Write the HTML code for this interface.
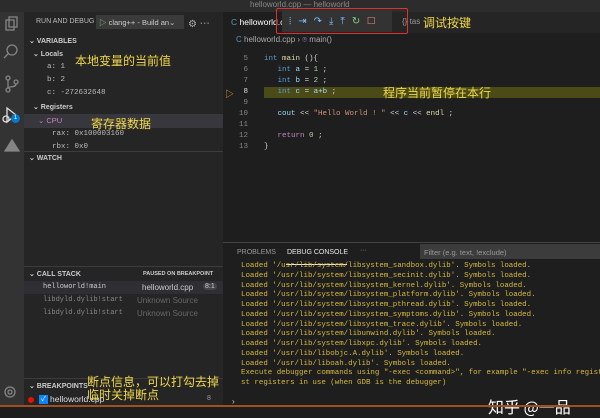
<!DOCTYPE html>
<html><head><meta charset="utf-8"><style>
*{margin:0;padding:0;box-sizing:border-box}
body{width:600px;height:407px;background:#1e1e1e;position:relative;overflow:hidden;font-family:"Liberation Sans","Noto Sans CJK SC",sans-serif;color:#ccc}
.a{position:absolute;white-space:nowrap}
.m{font-family:"Liberation Mono","Noto Sans CJK SC",monospace}
.cn{color:#f0d848;font-size:12px;font-family:"Noto Sans CJK SC",sans-serif}
.sb{font-size:7px;font-weight:bold;color:#ccc}
</style></head><body>
<div class="a" style="left:0;top:0;width:600px;height:12px;background:#2c2c2c"></div>
<div class="a" style="left:250px;top:0;font-size:8px;color:#888">helloworld.cpp — helloworld</div>
<div class="a" style="left:0;top:12px;width:24px;height:395px;background:#333"></div>
<svg class="a" style="left:0;top:12px" width="24" height="395" viewBox="0 0 24 395" fill="none" stroke="#858585" stroke-width="1.3">
<rect x="6" y="8" width="8" height="10"/><rect x="9" y="5" width="8" height="10"/>
<circle cx="12" cy="38" r="5"/><path d="M8 42 L4 46"/>
<circle cx="8" cy="66" r="2"/><circle cx="8" cy="78" r="2"/><circle cx="16" cy="70" r="2"/><path d="M8 68V76M16 72C16 76 8 74 8 76"/>
<path d="M7 96 L16 103 L7 110Z" stroke="#ddd"/><circle cx="6" cy="107" r="3" stroke="#ddd"/>
<path d="M5 139 L12 128 L19 139Z" fill="#858585"/>
<circle cx="10" cy="380" r="5"/><circle cx="10" cy="380" r="2"/>
</svg>
<div class="a" style="left:11px;top:114px;width:9px;height:9px;border-radius:50%;background:#007acc;color:#fff;font-size:6px;text-align:center;line-height:9px">1</div>
<div class="a" style="left:24px;top:12px;width:199px;height:395px;background:#252526"></div>
<div class="a" style="left:36px;top:18px;font-size:7px;color:#bbb">RUN AND DEBUG</div>
<div class="a" style="left:96px;top:15px;width:88px;height:14px;background:#3a3a3a"></div>
<div class="a" style="left:99px;top:17px;font-size:7.5px;color:#ccc"><span style="color:#89d185">▷</span> clang++ - Build an⌄</div>
<div class="a" style="left:188px;top:15px;font-size:10px;color:#aaa">⚙ ⋯</div>
<div class="a sb" style="left:29px;top:37px">⌄ VARIABLES</div>
<div class="a sb" style="left:33px;top:50px">⌄ Locals</div>
<div class="a m" style="left:47px;top:63px;font-size:7.5px;color:#bbb">a: 1</div>
<div class="a m" style="left:47px;top:76px;font-size:7.5px;color:#bbb">b: 2</div>
<div class="a m" style="left:47px;top:89px;font-size:7.5px;color:#bbb">c: -272632648</div>
<div class="a sb" style="left:33px;top:103px">⌄ Registers</div>
<div class="a" style="left:24px;top:114px;width:199px;height:14px;background:#37373d"></div>
<div class="a" style="left:38px;top:116px;font-size:7.5px;color:#c586c0">⌄ CPU</div>
<div class="a m" style="left:52px;top:130px;font-size:7.5px;color:#bbb">rax: 0x100003160</div>
<div class="a m" style="left:52px;top:143px;font-size:7.5px;color:#bbb">rbx: 0x0</div>
<div class="a" style="left:24px;top:151px;width:199px;height:1px;background:#3c3c3c"></div>
<div class="a sb" style="left:29px;top:154px">⌄ WATCH</div>
<div class="a" style="left:24px;top:266px;width:199px;height:1px;background:#3c3c3c"></div>
<div class="a sb" style="left:29px;top:270px">⌄ CALL STACK</div>
<div class="a" style="left:143px;top:271px;font-size:5.5px;font-weight:bold;color:#ccc">PAUSED ON BREAKPOINT</div>
<div class="a" style="left:24px;top:281px;width:199px;height:13px;background:#2f2f33"></div>
<div class="a m" style="left:43px;top:283px;font-size:7px;color:#ccc">helloworld!main</div>
<div class="a" style="left:142px;top:283px;font-size:8px;color:#ccc">helloworld.cpp</div>
<div class="a" style="left:203px;top:283px;font-size:7px;background:#444;padding:0 2px;border-radius:4px">8:1</div>
<div class="a m" style="left:43px;top:296px;font-size:7px;color:#888">libdyld.dylib!start</div>
<div class="a" style="left:137px;top:296px;font-size:8px;color:#666">Unknown Source</div>
<div class="a m" style="left:43px;top:309px;font-size:7px;color:#888">libdyld.dylib!start</div>
<div class="a" style="left:137px;top:309px;font-size:8px;color:#666">Unknown Source</div>
<div class="a" style="left:24px;top:378px;width:199px;height:1px;background:#3c3c3c"></div>
<div class="a sb" style="left:29px;top:382px">⌄ BREAKPOINTS</div>
<div class="a" style="left:28px;top:397px;width:6px;height:6px;border-radius:50%;background:#e51400"></div>
<div class="a" style="left:39px;top:395px;width:9px;height:9px;background:#0a84ff;color:#fff;font-size:7px;line-height:9px;text-align:center">✓</div>
<div class="a" style="left:50px;top:394px;font-size:8.5px;color:#ddd">helloworld.cpp</div>
<div class="a" style="left:207px;top:395px;font-size:7px;color:#999">8</div>
<div class="a cn" style="left:75px;top:52px">本地变量的当前值</div>
<div class="a cn" style="left:91px;top:115px">寄存器数据</div>
<div class="a cn" style="left:87px;top:375px;line-height:13px">断点信息，可以打勾去掉<br>临时关掉断点</div>
<div class="a" style="left:223px;top:12px;width:377px;height:21px;background:#252526"></div>
<div class="a" style="left:223px;top:12px;width:60px;height:21px;background:#1e1e1e"></div>
<div class="a" style="left:231px;top:17px;font-size:8.5px;color:#fff"><span style="color:#519aba">C</span> helloworld.c</div>
<div class="a" style="left:282px;top:10px;width:110px;height:22px;background:#333"></div>
<div class="a" style="left:289px;top:16px;font-size:10px;color:#75beff;letter-spacing:7px">⦙⇥↷⤓⤒<span style="color:#89d185">↻</span><span style="color:#f48771">☐</span></div>
<div class="a" style="left:276px;top:8px;width:132px;height:26px;border:1.5px solid #e03030;border-radius:2px"></div>
<div class="a" style="left:402px;top:17px;font-size:8px;color:#999">{} tas</div>
<div class="a cn" style="left:423px;top:14px">调试按键</div>
<div class="a" style="left:236px;top:35px;font-size:8px;color:#aaa"><span style="color:#519aba">C</span> helloworld.cpp › <span style="color:#b180d7">⌾</span> main()</div>
<div class="a" style="left:264px;top:87px;width:336px;height:11px;background:#4b4b18"></div>
<div class="a" style="left:225px;top:87px;font-size:9px;color:#f0a030">▷</div>
<div class="a m" style="left:228px;top:54px;font-size:7.5px;line-height:11px;color:#858585;text-align:right;width:20px">5<br>6<br>7<br><span style="color:#ddd">8</span><br>9<br>10<br>11<br>12<br>13</div>
<div class="a m" style="left:264px;top:54px;font-size:7.5px;line-height:11px;color:#d4d4d4"><span style="color:#569cd6">int</span> <span style="color:#dcdcaa">main</span> (){<br>&nbsp;&nbsp;&nbsp;<span style="color:#569cd6">int</span> <span style="color:#9cdcfe">a</span> = <span style="color:#b5cea8">1</span> ;<br>&nbsp;&nbsp;&nbsp;<span style="color:#569cd6">int</span> <span style="color:#9cdcfe">b</span> = <span style="color:#b5cea8">2</span> ;<br>&nbsp;&nbsp;&nbsp;<span style="color:#569cd6">int</span> <span style="color:#9cdcfe">c</span> = <span style="color:#9cdcfe">a</span>+<span style="color:#9cdcfe">b</span> ;<br><br>&nbsp;&nbsp;&nbsp;<span style="color:#9cdcfe">cout</span> &lt;&lt; <span style="color:#ce9178">"Hello World ! "</span> &lt;&lt; <span style="color:#9cdcfe">c</span> &lt;&lt; <span style="color:#dcdcaa">endl</span> ;<br><br>&nbsp;&nbsp;&nbsp;<span style="color:#c586c0">return</span> <span style="color:#b5cea8">0</span> ;<br>}</div>
<div class="a cn" style="left:383px;top:84px">程序当前暂停在本行</div>
<div class="a" style="left:223px;top:242px;width:377px;height:1px;background:#444"></div>
<div class="a" style="left:237px;top:249px;font-size:7px;color:#999">PROBLEMS</div>
<div class="a" style="left:287px;top:249px;font-size:7px;color:#e7e7e7">DEBUG CONSOLE</div>
<div class="a" style="left:286px;top:264px;width:61px;height:1px;background:#e7e7e7"></div>
<div class="a" style="left:360px;top:247px;font-size:7px;color:#999">···</div>
<div class="a" style="left:420px;top:244px;width:180px;height:15px;background:#3c3c3c"></div>
<div class="a" style="left:424px;top:248px;font-size:7.5px;color:#999">Filter (e.g. text, !exclude)</div>
<div class="a m" style="left:241px;top:262px;font-size:7.45px;line-height:9.75px;color:#d7ba3d">Loaded '/usr/lib/system/libsystem_sandbox.dylib'. Symbols loaded.<br>Loaded '/usr/lib/system/libsystem_secinit.dylib'. Symbols loaded.<br>Loaded '/usr/lib/system/libsystem_kernel.dylib'. Symbols loaded.<br>Loaded '/usr/lib/system/libsystem_platform.dylib'. Symbols loaded.<br>Loaded '/usr/lib/system/libsystem_pthread.dylib'. Symbols loaded.<br>Loaded '/usr/lib/system/libsystem_symptoms.dylib'. Symbols loaded.<br>Loaded '/usr/lib/system/libsystem_trace.dylib'. Symbols loaded.<br>Loaded '/usr/lib/system/libunwind.dylib'. Symbols loaded.<br>Loaded '/usr/lib/system/libxpc.dylib'. Symbols loaded.<br>Loaded '/usr/lib/libobjc.A.dylib'. Symbols loaded.<br>Loaded '/usr/lib/liboah.dylib'. Symbols loaded.<br>Execute debugger commands using "-exec &lt;command&gt;", for example "-exec info regist<br>st registers in use (when GDB is the debugger)</div>
<div class="a" style="left:232px;top:397px;font-size:8px;color:#ccc">›</div>
<div class="a" style="left:488px;top:394px;font-size:16px;color:#fff;font-family:'Noto Sans CJK SC',sans-serif">知乎 @一品</div>
<div class="a" style="left:0;top:405px;width:600px;height:2px;background:#a05020"></div>
</body></html>
